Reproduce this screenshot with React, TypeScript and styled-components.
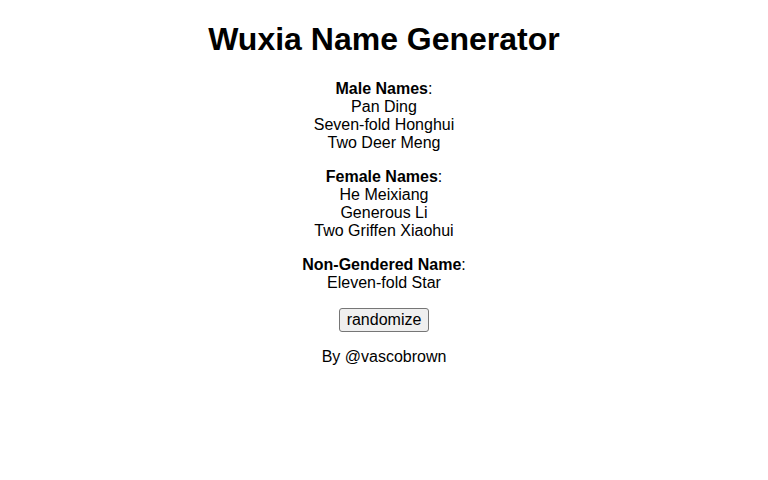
import React, { useState } from "react";
import styled, { createGlobalStyle } from "styled-components";

const GlobalStyle = createGlobalStyle`
  body {
    margin: 0;
    background: #ffffff;
    color: #000000;
    font-family: "Liberation Sans", Arial, sans-serif;
  }
`;

const Page = styled.div`
  text-align: center;
  font-size: 16px;
  line-height: 18px;
`;

const Title = styled.h1`
  font-size: 32px;
  line-height: 37px;
  font-weight: bold;
  margin: 21px 0 22px;
`;

const Group = styled.p`
  margin: 0 0 16px;
`;

const Label = styled.b`
  font-weight: bold;
`;

const Button = styled.button`
  font-family: "Liberation Sans", Arial, sans-serif;
  font-size: 16px;
  line-height: 18px;
  padding: 2px 7px;
  color: #000;
  background: #efefef;
  border: 1px solid #767676;
  border-radius: 3px;
  cursor: pointer;
  &:hover {
    background: #e5e5e5;
  }
`;

const ButtonRow = styled.div`
  margin: 0 0 16px;
`;

const nameSets = {
  male: [
    ["Pan Ding", "Seven-fold Honghui", "Two Deer Meng"],
    ["Lin Feng", "Nine-fold Zhao", "Three Cranes Wei"],
  ],
  female: [
    ["He Meixiang", "Generous Li", "Two Griffen Xiaohui"],
    ["Bai Lian", "Gentle Hua", "Five Lotus Yue"],
  ],
  neutral: [["Eleven-fold Star"], ["Silent River"]],
};

function NameGroup({ label, names }: { label: string; names: string[] }) {
  return (
    <Group>
      <Label>{label}</Label>:
      {names.map((n) => (
        <React.Fragment key={n}>
          <br />
          {n}
        </React.Fragment>
      ))}
    </Group>
  );
}

export default function App() {
  const [idx, setIdx] = useState(0);

  return (
    <Page>
      <GlobalStyle />
      <Title>Wuxia Name Generator</Title>
      <NameGroup label="Male Names" names={nameSets.male[idx]} />
      <NameGroup label="Female Names" names={nameSets.female[idx]} />
      <NameGroup label="Non-Gendered Name" names={nameSets.neutral[idx]} />
      <ButtonRow>
        <Button onClick={() => setIdx((idx + 1) % 2)}>randomize</Button>
      </ButtonRow>
      <Group>By @vascobrown</Group>
    </Page>
  );
}
